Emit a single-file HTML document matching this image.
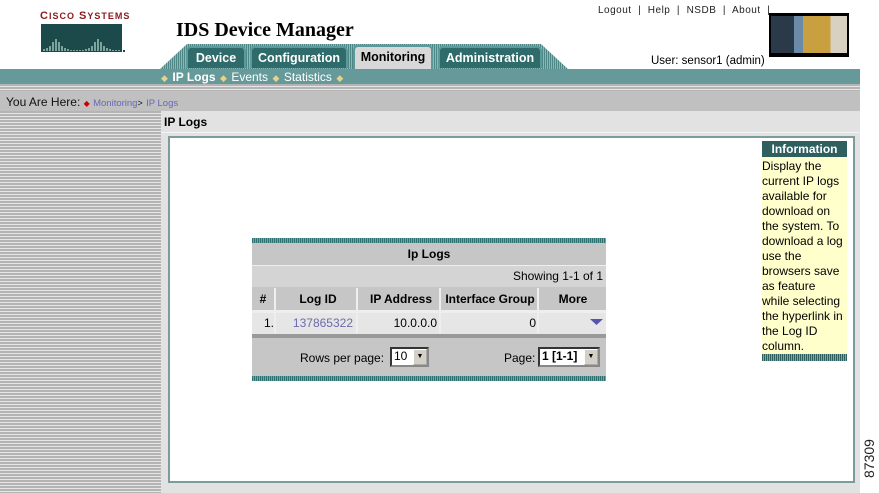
<!DOCTYPE html>
<html><head><style>
*{margin:0;padding:0;box-sizing:border-box}
body{width:879px;height:493px;position:relative;background:#fff;font-family:"Liberation Sans",Arial,sans-serif;overflow:hidden}
.a{position:absolute}
.stripes{background:repeating-linear-gradient(#b4b4b4 0 2px,#e6e6e6 2px 3px)}
.tab{position:absolute;top:46px;height:22px;background:#2f6b6b;color:#fff;font-weight:bold;font-size:12.5px;text-align:center;line-height:20px;border:2px solid #5a9a9a;border-bottom:none;border-radius:5px 5px 0 0}
.sub{color:#fff;font-size:12px}
.dia{color:#e6d28a;font-size:9px}
</style></head><body>
<div class="a" style="left:40px;top:10px;font:bold 11px 'Liberation Sans';color:#8a1a1a;letter-spacing:1px">C<span style="font-size:9px">ISCO</span> S<span style="font-size:9px">YSTEMS</span></div>
<div class="a" style="left:41px;top:24px;width:81px;height:28px;background:#1c4a4a"></div>
<svg class="a" style="left:41px;top:32px" width="86" height="22"><g stroke="#dfe" stroke-width="1">
<path d="M3 19v-2M6 19v-3M9 19v-5M12 19v-9M15 19v-12M18 19v-9M21 19v-5M24 19v-3M27 19v-2M30 19v-1M33 19v-1M36 19v-1M39 19v-1M42 19v-1M45 19v-2M48 19v-3M51 19v-5M54 19v-9M57 19v-12M60 19v-9M63 19v-5M66 19v-3M69 19v-2M72 19v-1M75 19v-1M78 19v-1"/></g><rect x="82" y="18" width="2" height="2" fill="#1c4a4a"/></svg>
<div class="a" style="left:176px;top:19px;font:bold 20px 'Liberation Serif',serif;color:#000">IDS Device Manager</div>
<div class="a" style="left:598px;top:5px;font-size:10px;color:#222;letter-spacing:.5px">Logout &nbsp;|&nbsp; Help &nbsp;|&nbsp; NSDB &nbsp;|&nbsp; About &nbsp;|</div>
<div class="a" style="left:769px;top:13px;width:80px;height:44px;background:#000"></div>
<div class="a" style="left:771px;top:16px;width:76px;height:37px;background:linear-gradient(90deg,#2a3a48 0 30%,#6b8aa8 30% 42%,#c8a040 42% 78%,#d8d0c0 78%)"></div>
<div class="a" style="left:651px;top:55px;font-size:11.5px;color:#000">User: sensor1 (admin)</div>
<div class="a" style="left:160px;top:44px;width:408px;height:25px;background:repeating-linear-gradient(90deg,#4f8686 0 1px,#8ab8b8 1px 2px);clip-path:polygon(27px 0,381px 0,408px 25px,0 25px)"></div>
<div class="tab" style="left:186px;width:60px">Device</div>
<div class="tab" style="left:250px;width:98px">Configuration</div>
<div class="tab" style="left:353px;width:80px;background:#d8d8d8;color:#000;height:24px;top:45px">Monitoring</div>
<div class="tab" style="left:438px;width:104px">Administration</div>
<div class="a" style="left:0;top:69px;width:860px;height:15px;background:#669999"></div>
<div class="a" style="left:161px;top:69px;line-height:15px"><span class="dia">◆</span> <b class="sub">IP Logs</b> <span class="dia">◆</span> <span class="sub">Events</span> <span class="dia">◆</span> <span class="sub">Statistics</span> <span class="dia">◆</span></div>
<div class="a stripes" style="left:0;top:84px;width:860px;height:7px"></div>
<div class="a" style="left:0;top:91px;width:860px;height:20px;background:#c0c0c0"></div>
<div class="a" style="left:6px;top:95px;font-size:12px;color:#111">You Are Here: <span style="color:#c00;font-size:8px">◆</span> <span style="font-size:9.5px;color:#6666bb">Monitoring</span><span style="font-size:9px">&gt;</span> <span style="font-size:9.5px;color:#6666bb">IP Logs</span></div>
<div class="a stripes" style="left:0;top:111px;width:161px;height:382px"></div>
<div class="a" style="left:161px;top:111px;width:699px;height:382px;background:#e2e2e2"></div>
<div class="a" style="left:164px;top:115px;font:bold 12px 'Liberation Sans';color:#000">IP Logs</div>
<div class="a" style="left:161px;top:132px;width:699px;height:1px;background:#f4f4f4"></div>
<div class="a" style="left:168px;top:136px;width:687px;height:347px;background:#fff;border:2px solid #7a9c9c"></div>
<div class="a" style="left:762px;top:141px;width:85px;height:220px;background:#ffffcc"></div>
<div class="a" style="left:762px;top:141px;width:85px;height:16px;background:#2f5f5f;color:#fff;font:bold 12px 'Liberation Sans';text-align:center;line-height:16px">Information</div>
<div class="a" style="left:762px;top:159px;width:84px;font-size:12px;line-height:15px;color:#000">Display the<br>current IP logs<br>available for<br>download on<br>the system. To<br>download a log<br>use the<br>browsers save<br>as feature<br>while selecting<br>the hyperlink in<br>the Log ID<br>column.</div>
<div class="a" style="left:762px;top:354px;width:85px;height:7px;background:repeating-linear-gradient(90deg,#2f5f5f 0 1px,#7aa 1px 2px)"></div>
<div class="a" style="left:252px;top:238px;width:354px;height:143px;background:#c6c6c6"></div>
<div class="a" style="left:252px;top:238px;width:354px;height:5px;background:repeating-linear-gradient(90deg,#2f7070 0 1px,#6aa 1px 2px)"></div>
<div class="a" style="left:252px;top:376px;width:354px;height:5px;background:repeating-linear-gradient(90deg,#2f7070 0 1px,#6aa 1px 2px)"></div>
<div class="a" style="left:252px;top:247px;width:354px;text-align:center;font:bold 12px 'Liberation Sans'">Ip Logs</div>
<div class="a" style="left:252px;top:265px;width:354px;height:1px;background:#eee"></div>
<div class="a" style="left:252px;top:266px;width:354px;height:21px;background:#d4d4d4;text-align:right;padding-right:3px;font-size:12px;line-height:21px">Showing 1-1 of 1</div>
<div class="a" style="left:252px;top:288px;font-weight:bold;font-size:12px;height:22px;line-height:22px;width:354px">
<span class="a" style="left:0;width:22px;text-align:center">#</span>
<span class="a" style="left:24px;width:84px;text-align:center">Log ID</span>
<span class="a" style="left:110px;width:78px;text-align:center">IP Address</span>
<span class="a" style="left:190px;width:96px;text-align:center">Interface Group</span>
<span class="a" style="left:288px;width:66px;text-align:center">More</span></div>
<div class="a" style="left:274px;top:288px;width:2px;height:47px;background:#eee"></div>
<div class="a" style="left:356px;top:288px;width:2px;height:47px;background:#eee"></div>
<div class="a" style="left:439px;top:288px;width:2px;height:47px;background:#eee"></div>
<div class="a" style="left:537px;top:288px;width:2px;height:47px;background:#eee"></div>
<div class="a" style="left:252px;top:310px;width:354px;height:3px;background:#eee"></div>
<div class="a" style="left:252px;top:313px;width:354px;height:21px;background:#e6e6e6;font-size:12px;line-height:21px">
<span class="a" style="left:0;width:22px;text-align:right">1.</span>
<span class="a" style="left:24px;width:77px;text-align:right;color:#6b6baa">137865322</span>
<span class="a" style="left:110px;width:75px;text-align:right">10.0.0.0</span>
<span class="a" style="left:190px;width:94px;text-align:right">0</span>
<svg class="a" style="left:338px;top:6px" width="13" height="7"><path d="M0 0h13L6.5 6z" fill="#5555aa"/></svg></div>
<div class="a" style="left:274px;top:313px;width:2px;height:21px;background:#eee"></div>
<div class="a" style="left:356px;top:313px;width:2px;height:21px;background:#eee"></div>
<div class="a" style="left:439px;top:313px;width:2px;height:21px;background:#eee"></div>
<div class="a" style="left:537px;top:313px;width:2px;height:21px;background:#eee"></div>
<div class="a" style="left:252px;top:334px;width:354px;height:4px;background:#999"></div>
<div class="a" style="left:300px;top:351px;font-size:12px">Rows per page:</div>
<div class="a" style="left:390px;top:347px;width:39px;height:20px;background:#fff;border:2px inset #888;font-size:12px;padding-left:2px;line-height:15px">10</div>
<div class="a" style="left:413px;top:349px;width:14px;height:16px;background:#d4d0c8;border:1px outset #fff;font-size:7px;text-align:center;line-height:14px">▼</div>
<div class="a" style="left:504px;top:351px;font-size:12px">Page:</div>
<div class="a" style="left:538px;top:347px;width:62px;height:20px;background:#fff;border:2px inset #888;font:bold 12px 'Liberation Sans';padding-left:2px;line-height:15px">1 [1-1]</div>
<div class="a" style="left:584px;top:349px;width:14px;height:16px;background:#d4d0c8;border:1px outset #fff;font-size:7px;text-align:center;line-height:14px">▼</div>
<div class="a" style="font-size:14px;color:#222;transform:rotate(-90deg);transform-origin:left top;top:478px;left:861px">87309</div>
</body></html>
